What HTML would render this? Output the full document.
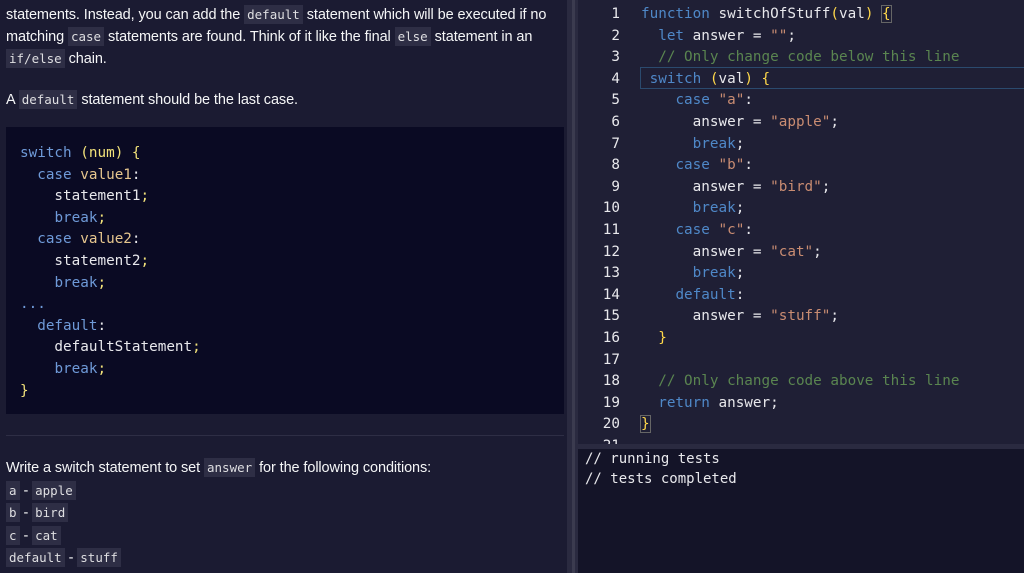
<!DOCTYPE html>
<html><head><meta charset="utf-8"><style>
*{margin:0;padding:0;box-sizing:border-box}
body{width:1024px;height:573px;overflow:hidden;background:#1b1b32;position:relative;font-family:"Liberation Sans",sans-serif;color:#f5f6f7}
.p{position:absolute;left:6px;font-size:14.5px;white-space:nowrap;letter-spacing:-0.1px}
code{font-family:"DejaVu Sans Mono",monospace;font-size:12.5px;background:#2e2e45;color:#dfdfe2;padding:2px 3px;letter-spacing:0}
.m{font-family:"DejaVu Sans Mono",monospace;font-size:14.3px;white-space:pre;position:absolute;line-height:21.6px}
.k{color:#6f9ad8}.y{color:#f2e27a}.v{color:#e6c68e}.w{color:#e8e8ec}
.ek{color:#4f88c8}.s{color:#c98c72}.c{color:#5a8550}.b{color:#ffd84a}
</style></head><body>
<div class="p" style="top:7px">statements. Instead, you can add the <code>default</code> statement which will be executed if no</div>
<div class="p" style="top:29px">matching <code>case</code> statements are found. Think of it like the final <code>else</code> statement in an</div>
<div class="p" style="top:51px"><code>if/else</code> chain.</div>
<div class="p" style="top:92px">A <code>default</code> statement should be the last case.</div>
<div style="position:absolute;left:6px;top:127px;width:558px;height:287px;background:#0a0a23"></div>
<div class="m w" style="left:20px;top:143px"><span class="k">switch</span> <span class="y">(num) {</span>
  <span class="k">case</span> <span class="v">value1</span>:
    statement1<span class="y">;</span>
    <span class="k">break</span><span class="y">;</span>
  <span class="k">case</span> <span class="v">value2</span>:
    statement2<span class="y">;</span>
    <span class="k">break</span><span class="y">;</span>
<span class="k">...</span>
  <span class="k">default</span>:
    defaultStatement<span class="y">;</span>
    <span class="k">break</span><span class="y">;</span>
<span class="y">}</span></div>
<div style="position:absolute;left:6px;top:435px;width:558px;height:1px;background:#2e2e45"></div>
<div class="p" style="top:460px">Write a switch statement to set <code>answer</code> for the following conditions:</div>
<div class="p" style="top:483px"><code>a</code> - <code>apple</code></div>
<div class="p" style="top:505px"><code>b</code> - <code>bird</code></div>
<div class="p" style="top:528px"><code>c</code> - <code>cat</code></div>
<div class="p" style="top:550px"><code>default</code> - <code>stuff</code></div>
<div style="position:absolute;left:567px;top:0;width:11px;height:573px;background:#2a2a40"></div>
<div style="position:absolute;left:572px;top:0;width:3px;height:573px;background:#3b3b4f"></div>
<div style="position:absolute;left:578px;top:0;width:446px;height:444px;background:#1f1f35;overflow:hidden">
<div style="position:absolute;left:62px;top:67px;width:390px;height:22px;border:1px solid #2b4a6e"></div>
<div class="m w" style="left:0;top:4px;width:42px;text-align:right">1
2
3
4
5
6
7
8
9
10
11
12
13
14
15
16
17
18
19
20
21</div>
<div class="m w" style="left:63px;top:4px"><span class="ek">function</span> switchOfStuff<span class="b">(</span>val<span class="b">)</span> <span class="b" style="outline:1px solid #666">{</span>
  <span class="ek">let</span> answer = <span class="s">""</span>;
  <span class="c">// Only change code below this line</span>
 <span class="ek">switch</span> <span class="b">(</span>val<span class="b">) {</span>
    <span class="ek">case</span> <span class="s">"a"</span>:
      answer = <span class="s">"apple"</span>;
      <span class="ek">break</span>;
    <span class="ek">case</span> <span class="s">"b"</span>:
      answer = <span class="s">"bird"</span>;
      <span class="ek">break</span>;
    <span class="ek">case</span> <span class="s">"c"</span>:
      answer = <span class="s">"cat"</span>;
      <span class="ek">break</span>;
    <span class="ek">default</span>:
      answer = <span class="s">"stuff"</span>;
  <span class="b">}</span>

  <span class="c">// Only change code above this line</span>
  <span class="ek">return</span> answer;
<span class="b" style="outline:1px solid #666">}</span></div>
</div>
<div style="position:absolute;left:578px;top:444px;width:446px;height:5px;background:#2a2a40"></div>
<div style="position:absolute;left:578px;top:449px;width:446px;height:124px;background:#141428"></div>
<div class="m w" style="left:585px;top:449px;line-height:20px;font-size:14px">// running tests
// tests completed</div>
</body></html>
